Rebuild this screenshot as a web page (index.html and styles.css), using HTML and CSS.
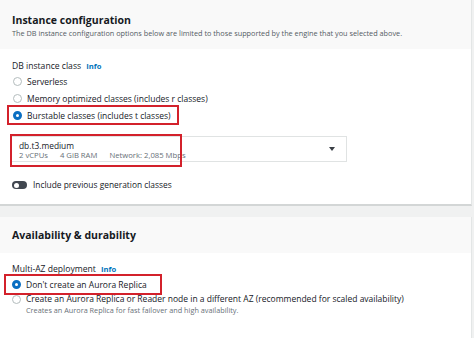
FILE: index.html
```html
<!DOCTYPE html>
<html lang="en">
<head>
    <meta charset="UTF-8">
    <title>Instance configuration</title>
    <link rel="stylesheet" href="styles.css">
</head>
<body>
    <section class="panel first">
        <header class="panel-head">
            <h2>Instance configuration</h2>
            <p class="desc">The DB instance configuration options below are limited to those supported by the engine that you selected above.</p>
        </header>
        <div class="panel-body">
            <div class="field-label">DB instance class <span class="info">Info</span></div>
            <div class="radio-row"><span class="radio"></span>Serverless</div>
            <div class="radio-row"><span class="radio"></span>Memory optimized classes (includes r classes)</div>
            <div class="radio-row"><span class="hl hl-burst"><span class="radio checked"></span>Burstable classes (includes t classes)</span></div>
            <div class="select">
                <div class="select-main">db.t3.medium</div>
                <div class="select-meta"><span>2 vCPUs</span><span>4 GiB RAM</span><span>Network: 2,085 Mbps</span></div>
                <span class="caret"></span>
                <span class="select-mark"></span>
            </div>
            <div class="toggle-row"><span class="toggle"></span>Include previous generation classes</div>
        </div>
    </section>
    <section class="panel second">
        <header class="panel-head short">
            <h2>Availability &amp; durability</h2>
        </header>
        <div class="panel-body tight">
            <div class="field-label">Multi-AZ deployment <span class="info">Info</span></div>
            <div class="radio-row az"><span class="hl hl-az"><span class="radio checked"></span>Don't create an Aurora Replica</span></div>
            <div class="radio-row az two">
                <span class="radio"></span>
                <div>
                    <div>Create an Aurora Replica or Reader node in a different AZ (recommended for scaled availability)</div>
                    <div class="hint">Creates an Aurora Replica for fast failover and high availability.</div>
                </div>
            </div>
        </div>
    </section>
</body>
</html>
```

FILE: styles.css
```css
body { margin: 0; width: 474px; height: 338px; overflow: hidden; background: #f0f1f1; font-family: "Open Sans", Arial, sans-serif; color: #16191f; }
.panel { background: #fff; margin-right: 2px; border-right: 1px solid #e3e6e6; }
.panel.first { border-bottom: 2px solid #d3d6d6; }
.panel.second { margin-top: 11px; height: 130px; }
.panel-head { background: #f9f9f9; height: 49px; padding: 13px 12px 0; box-sizing: border-box; }
.panel-head.short { height: 36px; padding-top: 11px; }
.panel-head h2 { margin: 0; font-size: 10.5px; line-height: 14px; font-weight: 700; }
.desc { margin: 1px 0 0; font-size: 7.3px; line-height: 10px; color: #545b64; }
.panel-body { padding: 11px 12px 13px; }
.panel-body.tight { padding-top: 10px; }
.field-label { font-size: 8.6px; line-height: 12px; margin-bottom: 1px; }
.info { color: #0073bb; font-weight: 700; font-size: 7.6px; margin-left: 3px; }
.radio-row { display: flex; align-items: center; height: 17px; font-size: 8.5px; padding-left: 1px; }
.radio-row.az { height: 16px; padding-left: 0; }
.radio-row.two { height: auto; align-items: flex-start; line-height: 14px; }
.radio-row.two .radio { margin-top: 3px; }
.hint { font-size: 7.3px; line-height: 10px; color: #687078; margin-top: -1px; }
.radio { width: 9px; height: 9px; box-sizing: border-box; border: 1px solid #b3bcbd; border-radius: 50%; margin-right: 5px; flex: none; }
.radio.checked { border: 3px solid #0a6fc2; }
.hl { position: relative; display: inline-flex; align-items: center; }
.hl::after { content: ""; position: absolute; border: 2px solid #d3212b; }
.hl-burst::after { top: -5px; bottom: -4px; left: -6px; right: -8px; }
.hl-az::after { top: -5px; bottom: -5px; left: -8px; right: -15px; }
.select { position: relative; margin-top: 12px; margin-left: -2px; width: 337px; height: 26px; box-sizing: border-box; border: 1px solid #e0e3e3; padding: 3px 8px 0; overflow: visible; }
.select-main { font-size: 8.4px; line-height: 11px; }
.select-meta { display: flex; gap: 12px; font-size: 7.7px; line-height: 9px; color: #687078; white-space: nowrap; }
.caret { position: absolute; right: 11px; top: 10px; border-left: 3px solid transparent; border-right: 3px solid transparent; border-top: 4px solid #3a3f45; }
.select-mark { position: absolute; left: -1px; top: -3px; width: 172px; height: 33px; box-sizing: border-box; border: 2px solid #d3212b; }
.toggle-row { display: flex; align-items: center; margin-top: 17px; font-size: 8.4px; line-height: 12px; }
.toggle { position: relative; width: 15px; height: 8px; border-radius: 4px; background: #414750; margin-right: 6px; }
.toggle::after { content: ""; position: absolute; left: 1.5px; top: 1.5px; width: 5px; height: 5px; border-radius: 50%; background: #fff; }
```
